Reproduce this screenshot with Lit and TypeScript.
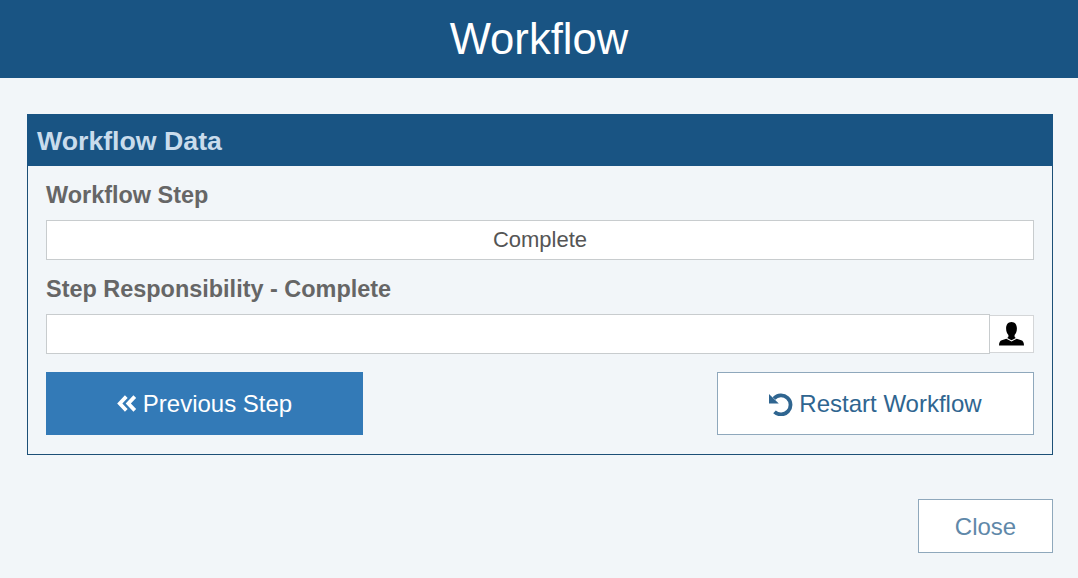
import { LitElement, html, css } from "lit";
import { customElement } from "lit/decorators.js";

@customElement("app-root")
export class AppRoot extends LitElement {
  static styles = css`
    :host {
      display: flex;
      flex-direction: column;
      width: 1078px;
      height: 578px;
      background: #f2f6f9;
      font-family: "Liberation Sans", Arial, sans-serif;
      overflow: hidden;
    }
    .title {
      height: 78px;
      flex: none;
      background: #195483;
      color: #fff;
      font-size: 43.6px;
      line-height: 78px;
      text-align: center;
    }
    .body {
      display: flex;
      flex-direction: column;
      padding: 36px 25px 0 27px;
    }
    .panel {
      height: 341px;
      box-sizing: border-box;
      border: 1px solid #1d5077;
      border-top: none;
    }
    .panel-head {
      height: 52px;
      margin: 0 -1px;
      padding-left: 10px;
      background: #195483;
      color: #c9dcec;
      font-size: 26.7px;
      font-weight: bold;
      line-height: 54px;
    }
    .panel-body {
      display: flex;
      flex-direction: column;
      padding: 0 18px;
    }
    .label {
      height: 54px;
      color: #666;
      font-size: 23.45px;
      font-weight: bold;
      line-height: 59px;
    }
    .field {
      height: 40px;
      box-sizing: border-box;
      background: #fff;
      border: 1px solid #c8ccce;
      color: #555;
      font-size: 22px;
      line-height: 38px;
      text-align: center;
    }
    .row {
      display: flex;
    }
    .row .field {
      flex: 1;
    }
    .lookup {
      width: 44px;
      height: 38px;
      margin-top: 1px;
      box-sizing: border-box;
      display: flex;
      align-items: center;
      justify-content: center;
      background: #fff;
      border: 1px solid #d4d6d8;
      border-left: none;
    }
    .actions {
      display: flex;
      justify-content: space-between;
      margin-top: 18px;
    }
    .btn {
      display: flex;
      align-items: center;
      justify-content: center;
      gap: 5px;
      box-sizing: border-box;
      width: 317px;
      height: 63px;
      font-size: 24px;
    }
    .primary {
      background: #337ab7;
      color: #fff;
    }
    .secondary {
      background: #fff;
      border: 1px solid #8fa8bc;
      color: #2f6590;
    }
    .footer {
      display: flex;
      justify-content: flex-end;
      margin-top: 44px;
    }
    .close {
      width: 135px;
      height: 54px;
      box-sizing: border-box;
      padding-top: 2px;
      display: flex;
      align-items: center;
      justify-content: center;
      background: #fff;
      border: 1px solid #8fa8bc;
      color: #5f88a9;
      font-size: 24px;
    }
  `;

  render() {
    return html`
      <div class="title">Workflow</div>
      <div class="body">
        <section class="panel">
          <div class="panel-head">Workflow Data</div>
          <div class="panel-body">
            <div class="label">Workflow Step</div>
            <div class="field">Complete</div>
            <div class="label">Step Responsibility - Complete</div>
            <div class="row">
              <div class="field"></div>
              <div class="lookup">
                <svg width="28" height="26" viewBox="0 0 28 26">
                  <path fill="#000" d="M13.500 1c3.500 0 5.400 2.800 5.400 6.400 0 2.700-.9 5-2.300 6.500-.2 1.500.1 2.500 1.300 3l-4.400 2.400-4.400-2.400c1.200-.5 1.500-1.500 1.300-3-1.400-1.500-2.300-3.800-2.300-6.500C8.100 3.800 10 1 13.500 1z"/>
                  <path fill="#000" d="M8.300 17.700l5.200 2.800 5.200-2.800 4.500 1.500c1.800.6 2.800 2 2.800 5.300H1c0-3.300 1-4.700 2.800-5.300z"/>
                </svg>
              </div>
            </div>
            <div class="actions">
              <div class="btn primary">
                <svg width="21" height="17" viewBox="0 0 21 17">
                  <path fill="none" stroke="#fff" stroke-width="3.800" stroke-linecap="square" d="M8 3 2.800 8.500 8 14M16.500 3 11.300 8.500 16.500 14"/>
                </svg>
                Previous Step
              </div>
              <div class="btn secondary">
                <svg width="25" height="24" viewBox="0 0 25 24">
                  <path fill="none" stroke="#2f6590" stroke-width="3.800" d="M5 6.500A9.500 9.500 0 1 1 5.500 19.800"/>
                  <path fill="#2f6590" d="M0 2 9.800 11.500H0z"/>
                </svg>
                Restart Workflow
              </div>
            </div>
          </div>
        </section>
        <div class="footer"><div class="close">Close</div></div>
      </div>
    `;
  }
}
